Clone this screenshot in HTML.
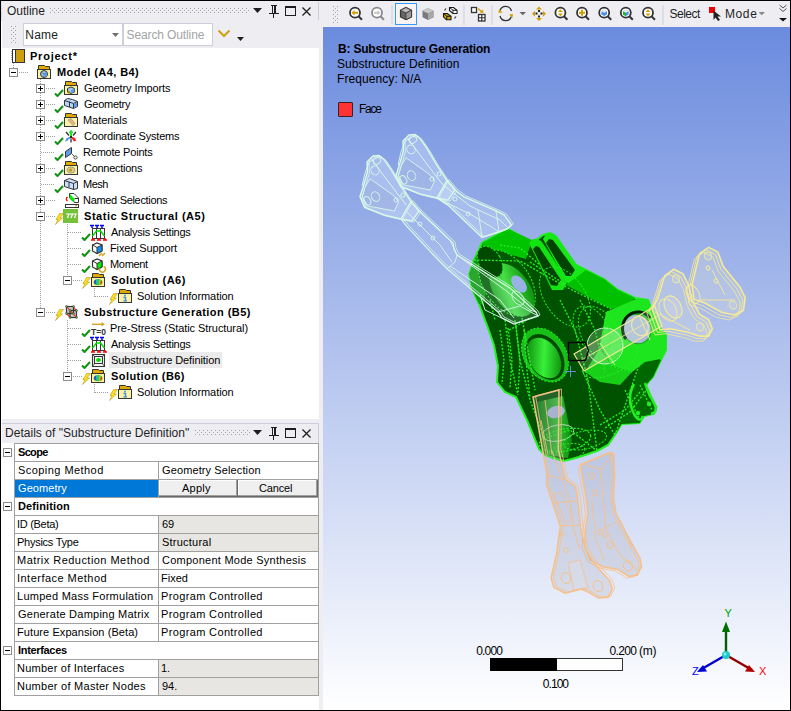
<!DOCTYPE html>
<html><head><meta charset="utf-8"><style>
html,body{margin:0;padding:0;width:791px;height:711px;overflow:hidden;background:#000}
body{font-family:"Liberation Sans", sans-serif;position:relative}
</style></head><body>
<div style="position:absolute;left:1px;top:1px;width:322px;height:709px;background:#eeeef2"></div><div style="position:absolute;left:1px;top:1px;width:1px;height:20px;background:#dcdfe8"></div><div style="position:absolute;left:7px;top:2.84px;height:16px;line-height:16px;font-size:12px;font-weight:normal;color:#1e1e1e;letter-spacing:-0.033px;white-space:nowrap;">Outline</div><svg style="position:absolute;left:50px;top:8px;" width="199" height="5" viewBox="0 0 199 5" shape-rendering="crispEdges"><defs><pattern id="p50_8" width="4" height="4" patternUnits="userSpaceOnUse"><rect x="0" y="0" width="1" height="1" fill="#a3a3a8"/><rect x="2" y="2" width="1" height="1" fill="#a3a3a8"/></pattern></defs><rect width="199" height="5" fill="url(#p50_8)"/></svg><svg style="position:absolute;left:253px;top:8px;shape-rendering:auto" width="10" height="6" viewBox="0 0 10 6" shape-rendering="crispEdges"><path d="M0 0H9L4.5 5Z" fill="#1e1e1e"/></svg><svg style="position:absolute;left:269px;top:5px;" width="10" height="13" viewBox="0 0 10 13" shape-rendering="crispEdges"><rect x="2" y="0" width="6" height="1" fill="#1e1e1e"/><rect x="3" y="1" width="1" height="7" fill="#1e1e1e"/><rect x="6" y="1" width="1" height="7" fill="#1e1e1e"/><rect x="5" y="1" width="1" height="7" fill="#1e1e1e"/><rect x="0" y="8" width="10" height="1" fill="#1e1e1e"/><rect x="4" y="9" width="1" height="4" fill="#1e1e1e"/></svg><svg style="position:absolute;left:285px;top:6px;" width="11" height="10" viewBox="0 0 11 10" shape-rendering="crispEdges"><rect x="0.5" y="1.5" width="10" height="8" fill="none" stroke="#1e1e1e"/><rect x="0" y="0" width="11" height="2" fill="#1e1e1e"/></svg><svg style="position:absolute;left:301px;top:6px;" width="11" height="11" viewBox="0 0 11 11"><path d="M1.5 1.5L9.5 9.5M9.5 1.5L1.5 9.5" stroke="#1e1e1e" stroke-width="1.25"/></svg><div style="position:absolute;left:318px;top:2px;width:1px;height:18px;background:#cccedb"></div><svg style="position:absolute;left:11px;top:26px;" width="6" height="18" viewBox="0 0 6 18" shape-rendering="crispEdges"><defs><pattern id="p11_26" width="4" height="4" patternUnits="userSpaceOnUse"><rect x="0" y="0" width="1" height="1" fill="#a3a3a8"/><rect x="2" y="2" width="1" height="1" fill="#a3a3a8"/></pattern></defs><rect width="6" height="18" fill="url(#p11_26)"/></svg><div style="position:absolute;left:23px;top:23px;width:100px;height:23px;background:#fff;border:1px solid #cccedb;box-sizing:border-box"></div><div style="position:absolute;left:25.3px;top:26.84px;height:16px;line-height:16px;font-size:12px;font-weight:normal;color:#1e1e1e;letter-spacing:0.200px;white-space:nowrap;">Name</div><svg style="position:absolute;left:112px;top:33px;shape-rendering:auto" width="8" height="5" viewBox="0 0 8 5" shape-rendering="crispEdges"><path d="M0 0H7L3.5 4Z" fill="#717171"/></svg><div style="position:absolute;left:123px;top:23px;width:90px;height:23px;background:#fff;border:1px solid #cccedb;box-sizing:border-box"></div><div style="position:absolute;left:126.5px;top:26.84px;height:16px;line-height:16px;font-size:12px;font-weight:normal;color:#a2a4a5;letter-spacing:-0.115px;white-space:nowrap;">Search Outline</div><svg style="position:absolute;left:217px;top:29px;" width="15" height="9" viewBox="0 0 15 9"><path d="M1.5 1.5L7 7L12.5 1.5" fill="none" stroke="#d0a010" stroke-width="2"/></svg><svg style="position:absolute;left:237px;top:37px;shape-rendering:auto" width="7" height="4" viewBox="0 0 7 4" shape-rendering="crispEdges"><path d="M0 0H7L3.5 4Z" fill="#1e1e1e"/></svg><div style="position:absolute;left:1px;top:48px;width:318px;height:371px;background:#fff"></div><div style="position:absolute;left:109px;top:352px;width:113px;height:16px;background:#ebebeb"></div><svg style="position:absolute;left:13px;top:63px;" width="1" height="5" viewBox="0 0 1 5" shape-rendering="crispEdges"><path d="M0.5 0V5" stroke="#a0a0a0" stroke-dasharray="1 1"/></svg><svg style="position:absolute;left:19px;top:72px;" width="10" height="1" viewBox="0 0 10 1" shape-rendering="crispEdges"><path d="M0 0.5H10" stroke="#a0a0a0" stroke-dasharray="1 1"/></svg><svg style="position:absolute;left:40px;top:79px;" width="1" height="234" viewBox="0 0 1 234" shape-rendering="crispEdges"><path d="M0.5 0V234" stroke="#a0a0a0" stroke-dasharray="1 1"/></svg><svg style="position:absolute;left:67px;top:224px;" width="1" height="57" viewBox="0 0 1 57" shape-rendering="crispEdges"><path d="M0.5 0V57" stroke="#a0a0a0" stroke-dasharray="1 1"/></svg><svg style="position:absolute;left:67px;top:320px;" width="1" height="57" viewBox="0 0 1 57" shape-rendering="crispEdges"><path d="M0.5 0V57" stroke="#a0a0a0" stroke-dasharray="1 1"/></svg><svg style="position:absolute;left:94px;top:288px;" width="1" height="9" viewBox="0 0 1 9" shape-rendering="crispEdges"><path d="M0.5 0V9" stroke="#a0a0a0" stroke-dasharray="1 1"/></svg><svg style="position:absolute;left:94px;top:384px;" width="1" height="9" viewBox="0 0 1 9" shape-rendering="crispEdges"><path d="M0.5 0V9" stroke="#a0a0a0" stroke-dasharray="1 1"/></svg><svg style="position:absolute;left:9px;top:48px;" width="17" height="17" viewBox="0 0 17 17"><rect x="3.5" y="1.5" width="12" height="13" fill="#cc9e10" stroke="#353535"/><rect x="4" y="2" width="2" height="12" fill="#fff"/><rect x="6" y="2" width="1" height="12" fill="#353535"/><path d="M2.5 3v10" stroke="#aaa" stroke-dasharray="1 1"/></svg><div style="position:absolute;left:30px;top:48.19px;height:16px;line-height:16px;font-size:11px;font-weight:bold;color:#000;letter-spacing:0.771px;white-space:nowrap;">Project*</div><svg style="position:absolute;left:9px;top:68px;" width="9" height="9" viewBox="0 0 9 9" shape-rendering="crispEdges"><rect x="0.5" y="0.5" width="8" height="8" fill="#fff" stroke="#8c8c8c"/><rect x="2" y="4" width="5" height="1" fill="#000"/></svg><svg style="position:absolute;left:19px;top:72px;" width="9" height="1" viewBox="0 0 9 1" shape-rendering="crispEdges"><path d="M0 0.5H9" stroke="#a0a0a0" stroke-dasharray="1 1"/></svg><svg style="position:absolute;left:36px;top:64px;" width="17" height="17" viewBox="0 0 17 17"><path d="M2.5 5.5V1.5H8.5L9.5 2.5H13.5V5.5Z" fill="#e1a900" stroke="#353535"/><rect x="1.5" y="5.5" width="13" height="9" fill="#fbf2a2" stroke="#353535"/><circle cx="8" cy="10" r="3.5" fill="#9cc4f4" stroke="#353535"/><path d="M8 10V13.5M8 10L5 8M8 10L11 8" stroke="#555" stroke-width="0.7"/><path d="M8 10L11 8V12L8 13.5Z" fill="#5a9cf0"/></svg><div style="position:absolute;left:57px;top:64.19px;height:16px;line-height:16px;font-size:11px;font-weight:bold;color:#000;letter-spacing:0.408px;white-space:nowrap;">Model (A4, B4)</div><svg style="position:absolute;left:36px;top:84px;" width="9" height="9" viewBox="0 0 9 9" shape-rendering="crispEdges"><rect x="0.5" y="0.5" width="8" height="8" fill="#fff" stroke="#8c8c8c"/><rect x="2" y="4" width="5" height="1" fill="#000"/><rect x="4" y="2" width="1" height="5" fill="#000"/></svg><svg style="position:absolute;left:46px;top:88px;" width="9" height="1" viewBox="0 0 9 1" shape-rendering="crispEdges"><path d="M0 0.5H9" stroke="#a0a0a0" stroke-dasharray="1 1"/></svg><svg style="position:absolute;left:54px;top:88px;" width="10" height="9" viewBox="0 0 10 9"><path d="M1 5.5L3.5 8L9 2" fill="none" stroke="#129612" stroke-width="2.1" stroke-linejoin="miter"/></svg><svg style="position:absolute;left:63px;top:80px;" width="17" height="17" viewBox="0 0 17 17"><path d="M2.5 5.5V1.5H8.5L9.5 2.5H13.5V5.5Z" fill="#e1a900" stroke="#353535"/><rect x="1.5" y="5.5" width="13" height="9" fill="#fbf2a2" stroke="#353535"/><path d="M4.5 8.5L8 7L11.5 8.5V12L8 13.5L4.5 12Z" fill="#a8cdf8" stroke="#353535"/><path d="M8 10V13.5L11.5 12V8.5Z" fill="#5a9cf0"/><path d="M4 12h3M5.5 10.5v3" stroke="#c08000" stroke-width="1"/></svg><div style="position:absolute;left:84px;top:80.19px;height:16px;line-height:16px;font-size:11px;font-weight:normal;color:#000;letter-spacing:-0.100px;white-space:nowrap;">Geometry Imports</div><svg style="position:absolute;left:36px;top:100px;" width="9" height="9" viewBox="0 0 9 9" shape-rendering="crispEdges"><rect x="0.5" y="0.5" width="8" height="8" fill="#fff" stroke="#8c8c8c"/><rect x="2" y="4" width="5" height="1" fill="#000"/><rect x="4" y="2" width="1" height="5" fill="#000"/></svg><svg style="position:absolute;left:46px;top:104px;" width="9" height="1" viewBox="0 0 9 1" shape-rendering="crispEdges"><path d="M0 0.5H9" stroke="#a0a0a0" stroke-dasharray="1 1"/></svg><svg style="position:absolute;left:54px;top:104px;" width="10" height="9" viewBox="0 0 10 9"><path d="M1 5.5L3.5 8L9 2" fill="none" stroke="#129612" stroke-width="2.1" stroke-linejoin="miter"/></svg><svg style="position:absolute;left:63px;top:96px;" width="17" height="17" viewBox="0 0 17 17"><path d="M1.5 4.5L4.5 2.5L9.5 3.5L14.5 5.5V10.5L10.5 12.5L1.5 9.5Z" fill="#b5d5fb" stroke="#353535"/><path d="M6.5 5.5V11M10.5 7.5V12.5M1.5 4.5L10.5 7.5L14.5 5.5" fill="none" stroke="#353535"/><path d="M11 8L14 6V10L11 12Z" fill="#5aa0f0"/></svg><div style="position:absolute;left:84px;top:96.19px;height:16px;line-height:16px;font-size:11px;font-weight:normal;color:#000;letter-spacing:-0.257px;white-space:nowrap;">Geometry</div><svg style="position:absolute;left:36px;top:116px;" width="9" height="9" viewBox="0 0 9 9" shape-rendering="crispEdges"><rect x="0.5" y="0.5" width="8" height="8" fill="#fff" stroke="#8c8c8c"/><rect x="2" y="4" width="5" height="1" fill="#000"/><rect x="4" y="2" width="1" height="5" fill="#000"/></svg><svg style="position:absolute;left:46px;top:120px;" width="9" height="1" viewBox="0 0 9 1" shape-rendering="crispEdges"><path d="M0 0.5H9" stroke="#a0a0a0" stroke-dasharray="1 1"/></svg><svg style="position:absolute;left:54px;top:120px;" width="10" height="9" viewBox="0 0 10 9"><path d="M1 5.5L3.5 8L9 2" fill="none" stroke="#129612" stroke-width="2.1" stroke-linejoin="miter"/></svg><svg style="position:absolute;left:63px;top:112px;" width="17" height="17" viewBox="0 0 17 17"><path d="M2.5 5.5V1.5H8.5L9.5 2.5H13.5V5.5Z" fill="#e1a900" stroke="#353535"/><rect x="1.5" y="5.5" width="13" height="9" fill="#fbf2a2" stroke="#353535"/><path d="M5 8L8 6.5L12 11.5L10 13.5Z" fill="#f0b080" stroke="#999" stroke-width="0.8"/></svg><div style="position:absolute;left:83px;top:112.19px;height:16px;line-height:16px;font-size:11px;font-weight:normal;color:#000;letter-spacing:-0.050px;white-space:nowrap;">Materials</div><svg style="position:absolute;left:36px;top:132px;" width="9" height="9" viewBox="0 0 9 9" shape-rendering="crispEdges"><rect x="0.5" y="0.5" width="8" height="8" fill="#fff" stroke="#8c8c8c"/><rect x="2" y="4" width="5" height="1" fill="#000"/><rect x="4" y="2" width="1" height="5" fill="#000"/></svg><svg style="position:absolute;left:46px;top:136px;" width="9" height="1" viewBox="0 0 9 1" shape-rendering="crispEdges"><path d="M0 0.5H9" stroke="#a0a0a0" stroke-dasharray="1 1"/></svg><svg style="position:absolute;left:54px;top:136px;" width="10" height="9" viewBox="0 0 10 9"><path d="M1 5.5L3.5 8L9 2" fill="none" stroke="#129612" stroke-width="2.1" stroke-linejoin="miter"/></svg><svg style="position:absolute;left:63px;top:128px;" width="17" height="17" viewBox="0 0 17 17"><path d="M8 1.5L10.5 5H9V9H7V5H5.5Z" fill="#1ee81e"/><path d="M8 9L13.5 12.5L11 13.5Z" fill="#f02020"/><path d="M9 9.5L12.5 11.5" stroke="#f02020" stroke-width="2"/><path d="M7 9.5L3.5 11.5" stroke="#4a90f0" stroke-width="2"/><path d="M2 13.5L3.5 10.5L5 12.5Z" fill="#4a90f0"/><rect x="7" y="8" width="2" height="2" fill="#222"/><rect x="7" y="10.5" width="2" height="4" fill="#777"/><path d="M3 4L6 7.5M13 4L10 7.5" stroke="#333" stroke-width="1.3"/></svg><div style="position:absolute;left:84px;top:128.19px;height:16px;line-height:16px;font-size:11px;font-weight:normal;color:#000;letter-spacing:-0.206px;white-space:nowrap;">Coordinate Systems</div><svg style="position:absolute;left:41px;top:152px;" width="14" height="1" viewBox="0 0 14 1" shape-rendering="crispEdges"><path d="M0 0.5H14" stroke="#a0a0a0" stroke-dasharray="1 1"/></svg><svg style="position:absolute;left:54px;top:152px;" width="10" height="9" viewBox="0 0 10 9"><path d="M1 5.5L3.5 8L9 2" fill="none" stroke="#129612" stroke-width="2.1" stroke-linejoin="miter"/></svg><svg style="position:absolute;left:63px;top:144px;" width="17" height="17" viewBox="0 0 17 17"><path d="M2.5 7.5L8.5 3.5V9.5L2.5 13.5Z" fill="#5a9cf0" stroke="#353535"/><path d="M9 10L12 13" stroke="#555"/><circle cx="12.5" cy="13.5" r="1.6" fill="#fff" stroke="#444"/></svg><div style="position:absolute;left:83px;top:144.19px;height:16px;line-height:16px;font-size:11px;font-weight:normal;color:#000;letter-spacing:-0.208px;white-space:nowrap;">Remote Points</div><svg style="position:absolute;left:36px;top:164px;" width="9" height="9" viewBox="0 0 9 9" shape-rendering="crispEdges"><rect x="0.5" y="0.5" width="8" height="8" fill="#fff" stroke="#8c8c8c"/><rect x="2" y="4" width="5" height="1" fill="#000"/><rect x="4" y="2" width="1" height="5" fill="#000"/></svg><svg style="position:absolute;left:46px;top:168px;" width="9" height="1" viewBox="0 0 9 1" shape-rendering="crispEdges"><path d="M0 0.5H9" stroke="#a0a0a0" stroke-dasharray="1 1"/></svg><svg style="position:absolute;left:54px;top:168px;" width="10" height="9" viewBox="0 0 10 9"><path d="M1 5.5L3.5 8L9 2" fill="none" stroke="#129612" stroke-width="2.1" stroke-linejoin="miter"/></svg><svg style="position:absolute;left:63px;top:160px;" width="17" height="17" viewBox="0 0 17 17"><path d="M2.5 5.5V1.5H8.5L9.5 2.5H13.5V5.5Z" fill="#e1a900" stroke="#353535"/><rect x="1.5" y="5.5" width="13" height="9" fill="#fbf2a2" stroke="#353535"/><ellipse cx="8" cy="10" rx="4" ry="3" fill="#d8d090" stroke="#777" stroke-width="0.6"/><circle cx="7.5" cy="10" r="1.5" fill="#d09000"/></svg><div style="position:absolute;left:84px;top:160.19px;height:16px;line-height:16px;font-size:11px;font-weight:normal;color:#000;letter-spacing:-0.270px;white-space:nowrap;">Connections</div><svg style="position:absolute;left:41px;top:184px;" width="14" height="1" viewBox="0 0 14 1" shape-rendering="crispEdges"><path d="M0 0.5H14" stroke="#a0a0a0" stroke-dasharray="1 1"/></svg><svg style="position:absolute;left:54px;top:184px;" width="10" height="9" viewBox="0 0 10 9"><path d="M1 5.5L3.5 8L9 2" fill="none" stroke="#129612" stroke-width="2.1" stroke-linejoin="miter"/></svg><svg style="position:absolute;left:63px;top:176px;" width="17" height="17" viewBox="0 0 17 17"><path d="M1.5 4.5L6.5 2.5L14.5 5.5V12.5L10.5 13.5L1.5 10.5Z" fill="#c8e0fb" stroke="#353535"/><path d="M1.5 4.5L10.5 7.5L14.5 5.5M10.5 7.5V13.5M6 6V11.5" fill="none" stroke="#353535"/></svg><div style="position:absolute;left:83px;top:176.19px;height:16px;line-height:16px;font-size:11px;font-weight:normal;color:#000;letter-spacing:-0.500px;white-space:nowrap;">Mesh</div><svg style="position:absolute;left:36px;top:196px;" width="9" height="9" viewBox="0 0 9 9" shape-rendering="crispEdges"><rect x="0.5" y="0.5" width="8" height="8" fill="#fff" stroke="#8c8c8c"/><rect x="2" y="4" width="5" height="1" fill="#000"/><rect x="4" y="2" width="1" height="5" fill="#000"/></svg><svg style="position:absolute;left:46px;top:200px;" width="9" height="1" viewBox="0 0 9 1" shape-rendering="crispEdges"><path d="M0 0.5H9" stroke="#a0a0a0" stroke-dasharray="1 1"/></svg><svg style="position:absolute;left:63px;top:192px;" width="17" height="17" viewBox="0 0 17 17"><path d="M6.5 1.5H11L15.5 6V10.5H11.5L6.5 6Z" fill="#fff" stroke="#353535"/><path d="M7 2L11.5 7V10H11L6.5 6Z" fill="#00ee00"/><path d="M11.5 6.5H15.5" stroke="#353535"/><path d="M4.5 5C3 6 3 8 4.5 9" fill="none" stroke="#f00" stroke-width="1.3"/><rect x="2.5" y="12.5" width="13" height="3" fill="#fff" stroke="#353535"/><rect x="12" y="13" width="2" height="1.5" fill="#e0b030"/></svg><div style="position:absolute;left:83px;top:192.19px;height:16px;line-height:16px;font-size:11px;font-weight:normal;color:#000;letter-spacing:-0.313px;white-space:nowrap;">Named Selections</div><svg style="position:absolute;left:36px;top:212px;" width="9" height="9" viewBox="0 0 9 9" shape-rendering="crispEdges"><rect x="0.5" y="0.5" width="8" height="8" fill="#fff" stroke="#8c8c8c"/><rect x="2" y="4" width="5" height="1" fill="#000"/></svg><svg style="position:absolute;left:46px;top:216px;" width="9" height="1" viewBox="0 0 9 1" shape-rendering="crispEdges"><path d="M0 0.5H9" stroke="#a0a0a0" stroke-dasharray="1 1"/></svg><svg style="position:absolute;left:54px;top:213px;" width="10" height="12" viewBox="0 0 10 12"><path d="M5.5 0.5L9.5 0.5L6 5H8.5L1.5 11.5L4 6.5H2Z" fill="#f8e020" stroke="#b89a20" stroke-width="0.6"/></svg><svg style="position:absolute;left:63px;top:208px;" width="17" height="17" viewBox="0 0 17 17"><rect x="0" y="1" width="15" height="14" fill="#76c13a"/><path d="M3 6H6L4.5 10M6.5 6H9.5L8 10M10 6H13L11.5 10" stroke="#fff" stroke-width="1.2" fill="none"/></svg><div style="position:absolute;left:84px;top:208.19px;height:16px;line-height:16px;font-size:11px;font-weight:bold;color:#000;letter-spacing:0.548px;white-space:nowrap;">Static Structural (A5)</div><svg style="position:absolute;left:68px;top:232px;" width="14" height="1" viewBox="0 0 14 1" shape-rendering="crispEdges"><path d="M0 0.5H14" stroke="#a0a0a0" stroke-dasharray="1 1"/></svg><svg style="position:absolute;left:81px;top:232px;" width="10" height="9" viewBox="0 0 10 9"><path d="M1 5.5L3.5 8L9 2" fill="none" stroke="#129612" stroke-width="2.1" stroke-linejoin="miter"/></svg><svg style="position:absolute;left:90px;top:224px;" width="17" height="17" viewBox="0 0 17 17"><path d="M0 1.5H4M5 1.5H9M10 1.5H14M2 1.5V4M7 1.5V4M12 1.5V4" stroke="#0000ff" stroke-width="1.5"/><rect x="2.5" y="4.5" width="12" height="10" fill="#fff" stroke="#353535"/><path d="M6.5 4.5V14.5M10.5 4.5V14.5" stroke="#353535"/><path d="M2.5 12L6.5 7H10.5L14.5 12" fill="none" stroke="#00e000" stroke-width="1.5"/><path d="M1 16H5M7 16H11M13 16H17M3 14V16M9 14V16M15 14V16" stroke="#ff0000" stroke-width="1.5"/></svg><div style="position:absolute;left:111px;top:224.19px;height:16px;line-height:16px;font-size:11px;font-weight:normal;color:#000;letter-spacing:-0.244px;white-space:nowrap;">Analysis Settings</div><svg style="position:absolute;left:68px;top:248px;" width="14" height="1" viewBox="0 0 14 1" shape-rendering="crispEdges"><path d="M0 0.5H14" stroke="#a0a0a0" stroke-dasharray="1 1"/></svg><svg style="position:absolute;left:81px;top:248px;" width="10" height="9" viewBox="0 0 10 9"><path d="M1 5.5L3.5 8L9 2" fill="none" stroke="#129612" stroke-width="2.1" stroke-linejoin="miter"/></svg><svg style="position:absolute;left:90px;top:240px;" width="17" height="17" viewBox="0 0 17 17"><path d="M2.5 5L7 3L12 5V11L7 13.5L2.5 11Z" fill="#fff" stroke="#353535" stroke-width="1.2"/><path d="M7 7.5L12 5V11L7 13.5Z" fill="#0a90ff" stroke="#353535" stroke-width="1"/><path d="M2.5 5L7 7.5" stroke="#353535"/><path d="M9 16L12 13M12 16L15 13" stroke="#d4a820" stroke-width="1.6"/></svg><div style="position:absolute;left:110px;top:240.19px;height:16px;line-height:16px;font-size:11px;font-weight:normal;color:#000;letter-spacing:-0.117px;white-space:nowrap;">Fixed Support</div><svg style="position:absolute;left:68px;top:264px;" width="14" height="1" viewBox="0 0 14 1" shape-rendering="crispEdges"><path d="M0 0.5H14" stroke="#a0a0a0" stroke-dasharray="1 1"/></svg><svg style="position:absolute;left:81px;top:264px;" width="10" height="9" viewBox="0 0 10 9"><path d="M1 5.5L3.5 8L9 2" fill="none" stroke="#129612" stroke-width="2.1" stroke-linejoin="miter"/></svg><svg style="position:absolute;left:90px;top:256px;" width="17" height="17" viewBox="0 0 17 17"><path d="M2.5 5L7 3L12 5V11L7 13.5L2.5 11Z" fill="#fff" stroke="#353535" stroke-width="1.2"/><path d="M7 7.5L12 5V11L7 13.5Z" fill="#00ee00" stroke="#353535" stroke-width="1"/><path d="M2.5 5L7 7.5" stroke="#353535"/><path d="M9.5 12.5A3 3 0 1 0 14.5 11" fill="none" stroke="#d4a820" stroke-width="1.6"/><path d="M13 10.5L15.5 10L15 12.5Z" fill="#d4a820"/></svg><div style="position:absolute;left:110px;top:256.19px;height:16px;line-height:16px;font-size:11px;font-weight:normal;color:#000;letter-spacing:-0.320px;white-space:nowrap;">Moment</div><svg style="position:absolute;left:63px;top:276px;" width="9" height="9" viewBox="0 0 9 9" shape-rendering="crispEdges"><rect x="0.5" y="0.5" width="8" height="8" fill="#fff" stroke="#8c8c8c"/><rect x="2" y="4" width="5" height="1" fill="#000"/></svg><svg style="position:absolute;left:73px;top:280px;" width="9" height="1" viewBox="0 0 9 1" shape-rendering="crispEdges"><path d="M0 0.5H9" stroke="#a0a0a0" stroke-dasharray="1 1"/></svg><svg style="position:absolute;left:81px;top:277px;" width="10" height="12" viewBox="0 0 10 12"><path d="M5.5 0.5L9.5 0.5L6 5H8.5L1.5 11.5L4 6.5H2Z" fill="#f8e020" stroke="#b89a20" stroke-width="0.6"/></svg><svg style="position:absolute;left:90px;top:272px;" width="17" height="17" viewBox="0 0 17 17"><path d="M2.5 5.5V1.5H8.5L9.5 2.5H13.5V5.5Z" fill="#e1a900" stroke="#353535"/><rect x="1.5" y="5.5" width="13" height="9" fill="#fbf2a2" stroke="#353535"/><ellipse cx="8" cy="10.3" rx="4.3" ry="3" fill="#3aa03a"/><path d="M4 10A4 3 0 0 1 6 7.5L6.5 12.5A4 3 0 0 1 4 10Z" fill="#2a50e0"/><path d="M6 7.5L9 7.3L8.5 13L6.5 12.8Z" fill="#20c8a0"/><path d="M9 7.5L11 8L10.5 12.8L8.5 13Z" fill="#80e000"/><path d="M11 8.2A4 3 0 0 1 12.2 11L10.5 12.8Z" fill="#f03010"/></svg><div style="position:absolute;left:111px;top:272.19px;height:16px;line-height:16px;font-size:11px;font-weight:bold;color:#000;letter-spacing:0.492px;white-space:nowrap;">Solution (A6)</div><svg style="position:absolute;left:95px;top:296px;" width="14" height="1" viewBox="0 0 14 1" shape-rendering="crispEdges"><path d="M0 0.5H14" stroke="#a0a0a0" stroke-dasharray="1 1"/></svg><svg style="position:absolute;left:108px;top:293px;" width="10" height="12" viewBox="0 0 10 12"><path d="M5.5 0.5L9.5 0.5L6 5H8.5L1.5 11.5L4 6.5H2Z" fill="#f8e020" stroke="#b89a20" stroke-width="0.6"/></svg><svg style="position:absolute;left:117px;top:288px;" width="17" height="17" viewBox="0 0 17 17"><path d="M2.5 5.5V1.5H8.5L9.5 2.5H13.5V5.5Z" fill="#e1a900" stroke="#353535"/><rect x="1.5" y="5.5" width="13" height="9" fill="#fbf2a2" stroke="#353535"/><circle cx="8" cy="7.5" r="0.9" fill="#3a8af0"/><path d="M6.5 9.5H8.5V12.5M6.5 12.8H10" stroke="#3a8af0" stroke-width="1.3" fill="none"/></svg><div style="position:absolute;left:137px;top:288.19px;height:16px;line-height:16px;font-size:11px;font-weight:normal;color:#000;letter-spacing:-0.058px;white-space:nowrap;">Solution Information</div><svg style="position:absolute;left:36px;top:308px;" width="9" height="9" viewBox="0 0 9 9" shape-rendering="crispEdges"><rect x="0.5" y="0.5" width="8" height="8" fill="#fff" stroke="#8c8c8c"/><rect x="2" y="4" width="5" height="1" fill="#000"/></svg><svg style="position:absolute;left:46px;top:312px;" width="9" height="1" viewBox="0 0 9 1" shape-rendering="crispEdges"><path d="M0 0.5H9" stroke="#a0a0a0" stroke-dasharray="1 1"/></svg><svg style="position:absolute;left:54px;top:309px;" width="10" height="12" viewBox="0 0 10 12"><path d="M5.5 0.5L9.5 0.5L6 5H8.5L1.5 11.5L4 6.5H2Z" fill="#f8e020" stroke="#b89a20" stroke-width="0.6"/></svg><svg style="position:absolute;left:63px;top:304px;" width="17" height="17" viewBox="0 0 17 17"><path d="M3 2.5H10L13.5 6V13.5H6.5L3 10Z" fill="#c8c8c8"/><rect x="3.5" y="2.5" width="7" height="7" fill="none" stroke="#353535" stroke-width="1.2"/><rect x="7" y="6.5" width="6.5" height="7" fill="none" stroke="#353535" stroke-width="1.2"/><path d="M4 3L13 13M10.5 3L13.5 6.5M3.5 9.5L7 13" stroke="#f02020" stroke-width="1.1"/><g fill="#60c030" stroke="#333" stroke-width="0.5"><circle cx="3.5" cy="2.5" r="1"/><circle cx="10.5" cy="2.5" r="1"/><circle cx="3.5" cy="9.5" r="1"/><circle cx="10.5" cy="9.5" r="1"/><circle cx="7" cy="6.5" r="1"/><circle cx="13.5" cy="6.5" r="1"/><circle cx="7" cy="13.5" r="1"/><circle cx="13.5" cy="13.5" r="1"/></g></svg><div style="position:absolute;left:84px;top:304.19px;height:16px;line-height:16px;font-size:11px;font-weight:bold;color:#000;letter-spacing:0.463px;white-space:nowrap;">Substructure Generation (B5)</div><svg style="position:absolute;left:68px;top:328px;" width="14" height="1" viewBox="0 0 14 1" shape-rendering="crispEdges"><path d="M0 0.5H14" stroke="#a0a0a0" stroke-dasharray="1 1"/></svg><svg style="position:absolute;left:81px;top:328px;" width="10" height="9" viewBox="0 0 10 9"><path d="M1 5.5L3.5 8L9 2" fill="none" stroke="#129612" stroke-width="2.1" stroke-linejoin="miter"/></svg><svg style="position:absolute;left:90px;top:320px;" width="17" height="17" viewBox="0 0 17 17"><path d="M2 4.3H13" stroke="#d4a820" stroke-width="1.4"/><path d="M11.5 2L15 4.3L11.5 6.5Z" fill="#d4a820"/><text x="1" y="14.5" font-family="Liberation Sans" font-size="8.5" font-weight="bold" fill="#333">T=0</text></svg><div style="position:absolute;left:110px;top:320.19px;height:16px;line-height:16px;font-size:11px;font-weight:normal;color:#000;letter-spacing:-0.066px;white-space:nowrap;">Pre-Stress (Static Structural)</div><svg style="position:absolute;left:68px;top:344px;" width="14" height="1" viewBox="0 0 14 1" shape-rendering="crispEdges"><path d="M0 0.5H14" stroke="#a0a0a0" stroke-dasharray="1 1"/></svg><svg style="position:absolute;left:81px;top:344px;" width="10" height="9" viewBox="0 0 10 9"><path d="M1 5.5L3.5 8L9 2" fill="none" stroke="#129612" stroke-width="2.1" stroke-linejoin="miter"/></svg><svg style="position:absolute;left:90px;top:336px;" width="17" height="17" viewBox="0 0 17 17"><path d="M0 1.5H4M5 1.5H9M10 1.5H14M2 1.5V4M7 1.5V4M12 1.5V4" stroke="#0000ff" stroke-width="1.5"/><rect x="2.5" y="4.5" width="12" height="10" fill="#fff" stroke="#353535"/><path d="M6.5 4.5V14.5M10.5 4.5V14.5" stroke="#353535"/><path d="M2.5 12L6.5 7H10.5L14.5 12" fill="none" stroke="#00e000" stroke-width="1.5"/><path d="M1 16H5M7 16H11M13 16H17M3 14V16M9 14V16M15 14V16" stroke="#ff0000" stroke-width="1.5"/></svg><div style="position:absolute;left:111px;top:336.19px;height:16px;line-height:16px;font-size:11px;font-weight:normal;color:#000;letter-spacing:-0.244px;white-space:nowrap;">Analysis Settings</div><svg style="position:absolute;left:68px;top:360px;" width="14" height="1" viewBox="0 0 14 1" shape-rendering="crispEdges"><path d="M0 0.5H14" stroke="#a0a0a0" stroke-dasharray="1 1"/></svg><svg style="position:absolute;left:81px;top:360px;" width="10" height="9" viewBox="0 0 10 9"><path d="M1 5.5L3.5 8L9 2" fill="none" stroke="#129612" stroke-width="2.1" stroke-linejoin="miter"/></svg><svg style="position:absolute;left:90px;top:352px;" width="17" height="17" viewBox="0 0 17 17"><rect x="2.5" y="2.5" width="12" height="12" fill="#fff" stroke="#353535" stroke-width="1.1"/><rect x="4.5" y="4.5" width="8" height="7" fill="#fff" stroke="#353535" stroke-width="1.1"/><path d="M2.5 2.5L4.5 4.5M14.5 2.5L12.5 4.5M2.5 14.5L4.5 11.5M14.5 14.5L12.5 11.5" stroke="#353535" stroke-width="0.8"/><ellipse cx="8.5" cy="8" rx="2.5" ry="2" fill="#00e000"/></svg><div style="position:absolute;left:111px;top:352.19px;height:16px;line-height:16px;font-size:11px;font-weight:normal;color:#000;letter-spacing:-0.091px;white-space:nowrap;">Substructure Definition</div><svg style="position:absolute;left:63px;top:372px;" width="9" height="9" viewBox="0 0 9 9" shape-rendering="crispEdges"><rect x="0.5" y="0.5" width="8" height="8" fill="#fff" stroke="#8c8c8c"/><rect x="2" y="4" width="5" height="1" fill="#000"/></svg><svg style="position:absolute;left:73px;top:376px;" width="9" height="1" viewBox="0 0 9 1" shape-rendering="crispEdges"><path d="M0 0.5H9" stroke="#a0a0a0" stroke-dasharray="1 1"/></svg><svg style="position:absolute;left:81px;top:373px;" width="10" height="12" viewBox="0 0 10 12"><path d="M5.5 0.5L9.5 0.5L6 5H8.5L1.5 11.5L4 6.5H2Z" fill="#f8e020" stroke="#b89a20" stroke-width="0.6"/></svg><svg style="position:absolute;left:90px;top:368px;" width="17" height="17" viewBox="0 0 17 17"><path d="M2.5 5.5V1.5H8.5L9.5 2.5H13.5V5.5Z" fill="#e1a900" stroke="#353535"/><rect x="1.5" y="5.5" width="13" height="9" fill="#fbf2a2" stroke="#353535"/><ellipse cx="8" cy="10.3" rx="4.3" ry="3" fill="#3aa03a"/><path d="M4 10A4 3 0 0 1 6 7.5L6.5 12.5A4 3 0 0 1 4 10Z" fill="#2a50e0"/><path d="M6 7.5L9 7.3L8.5 13L6.5 12.8Z" fill="#20c8a0"/><path d="M9 7.5L11 8L10.5 12.8L8.5 13Z" fill="#80e000"/><path d="M11 8.2A4 3 0 0 1 12.2 11L10.5 12.8Z" fill="#f03010"/></svg><div style="position:absolute;left:111px;top:368.19px;height:16px;line-height:16px;font-size:11px;font-weight:bold;color:#000;letter-spacing:0.425px;white-space:nowrap;">Solution (B6)</div><svg style="position:absolute;left:95px;top:392px;" width="14" height="1" viewBox="0 0 14 1" shape-rendering="crispEdges"><path d="M0 0.5H14" stroke="#a0a0a0" stroke-dasharray="1 1"/></svg><svg style="position:absolute;left:108px;top:389px;" width="10" height="12" viewBox="0 0 10 12"><path d="M5.5 0.5L9.5 0.5L6 5H8.5L1.5 11.5L4 6.5H2Z" fill="#f8e020" stroke="#b89a20" stroke-width="0.6"/></svg><svg style="position:absolute;left:117px;top:384px;" width="17" height="17" viewBox="0 0 17 17"><path d="M2.5 5.5V1.5H8.5L9.5 2.5H13.5V5.5Z" fill="#e1a900" stroke="#353535"/><rect x="1.5" y="5.5" width="13" height="9" fill="#fbf2a2" stroke="#353535"/><circle cx="8" cy="7.5" r="0.9" fill="#3a8af0"/><path d="M6.5 9.5H8.5V12.5M6.5 12.8H10" stroke="#3a8af0" stroke-width="1.3" fill="none"/></svg><div style="position:absolute;left:137px;top:384.19px;height:16px;line-height:16px;font-size:11px;font-weight:normal;color:#000;letter-spacing:-0.058px;white-space:nowrap;">Solution Information</div><div style="position:absolute;left:2px;top:423px;width:317px;height:1px;background:#cccedb"></div><div style="position:absolute;left:5px;top:424.84px;height:16px;line-height:16px;font-size:12px;font-weight:normal;color:#1e1e1e;letter-spacing:0.029px;white-space:nowrap;">Details of &quot;Substructure Definition&quot;</div><svg style="position:absolute;left:195px;top:430px;" width="56" height="5" viewBox="0 0 56 5" shape-rendering="crispEdges"><defs><pattern id="p195_430" width="4" height="4" patternUnits="userSpaceOnUse"><rect x="0" y="0" width="1" height="1" fill="#a3a3a8"/><rect x="2" y="2" width="1" height="1" fill="#a3a3a8"/></pattern></defs><rect width="56" height="5" fill="url(#p195_430)"/></svg><svg style="position:absolute;left:253px;top:430px;shape-rendering:auto" width="10" height="6" viewBox="0 0 10 6" shape-rendering="crispEdges"><path d="M0 0H9L4.5 5Z" fill="#1e1e1e"/></svg><svg style="position:absolute;left:269px;top:427px;" width="10" height="13" viewBox="0 0 10 13" shape-rendering="crispEdges"><rect x="2" y="0" width="6" height="1" fill="#1e1e1e"/><rect x="3" y="1" width="1" height="7" fill="#1e1e1e"/><rect x="6" y="1" width="1" height="7" fill="#1e1e1e"/><rect x="5" y="1" width="1" height="7" fill="#1e1e1e"/><rect x="0" y="8" width="10" height="1" fill="#1e1e1e"/><rect x="4" y="9" width="1" height="4" fill="#1e1e1e"/></svg><svg style="position:absolute;left:285px;top:428px;" width="11" height="10" viewBox="0 0 11 10" shape-rendering="crispEdges"><rect x="0.5" y="1.5" width="10" height="8" fill="none" stroke="#1e1e1e"/><rect x="0" y="0" width="11" height="2" fill="#1e1e1e"/></svg><svg style="position:absolute;left:301px;top:428px;" width="11" height="11" viewBox="0 0 11 11"><path d="M1.5 1.5L9.5 9.5M9.5 1.5L1.5 9.5" stroke="#1e1e1e" stroke-width="1.25"/></svg><div style="position:absolute;left:318px;top:423px;width:1px;height:20px;background:#cccedb"></div><div style="position:absolute;left:1px;top:443px;width:318px;height:267px;background:#fff"></div><div style="position:absolute;left:14px;top:443px;width:305px;height:1px;background:#a0a0a0"></div><svg style="position:absolute;left:3px;top:448px;" width="9" height="9" viewBox="0 0 9 9" shape-rendering="crispEdges"><rect x="0.5" y="0.5" width="8" height="8" fill="#fff" stroke="#8c8c8c"/><rect x="2" y="4" width="5" height="1" fill="#000"/></svg><div style="position:absolute;left:18px;top:444.19px;height:16px;line-height:16px;font-size:11px;font-weight:bold;color:#000;letter-spacing:-0.675px;white-space:nowrap;">Scope</div><div style="position:absolute;left:14px;top:443px;width:1px;height:18px;background:#a0a0a0"></div><div style="position:absolute;left:318px;top:443px;width:1px;height:18px;background:#a0a0a0"></div><div style="position:absolute;left:14px;top:461px;width:305px;height:1px;background:#a0a0a0"></div><div style="position:absolute;left:158px;top:462px;width:1px;height:17px;background:#a0a0a0"></div><div style="position:absolute;left:18px;top:462.19px;height:16px;line-height:16px;font-size:11px;font-weight:normal;color:#000;letter-spacing:0.446px;white-space:nowrap;">Scoping Method</div><div style="position:absolute;left:162px;top:462.19px;height:16px;line-height:16px;font-size:11px;font-weight:normal;color:#000;letter-spacing:0.112px;white-space:nowrap;">Geometry Selection</div><div style="position:absolute;left:14px;top:461px;width:1px;height:18px;background:#a0a0a0"></div><div style="position:absolute;left:318px;top:461px;width:1px;height:18px;background:#a0a0a0"></div><div style="position:absolute;left:14px;top:479px;width:305px;height:1px;background:#a0a0a0"></div><div style="position:absolute;left:15px;top:480px;width:143px;height:17px;background:#0078d7"></div><div style="position:absolute;left:158px;top:480px;width:1px;height:17px;background:#a0a0a0"></div><div style="position:absolute;left:18px;top:480.19px;height:16px;line-height:16px;font-size:11px;font-weight:normal;color:#fff;letter-spacing:0.071px;white-space:nowrap;">Geometry</div><div style="position:absolute;left:159px;top:480px;width:79px;height:16px;background:#efefef"></div><div style="position:absolute;left:159px;top:480px;width:79px;height:1px;background:#fff"></div><div style="position:absolute;left:159px;top:480px;width:1px;height:16px;background:#fff"></div><div style="position:absolute;left:159px;top:495px;width:79px;height:1px;background:#a0a0a0"></div><div style="position:absolute;left:159px;top:496px;width:79px;height:1px;background:#696969"></div><div style="position:absolute;left:236px;top:480px;width:1px;height:16px;background:#a0a0a0"></div><div style="position:absolute;left:237px;top:480px;width:1px;height:17px;background:#696969"></div><div style="position:absolute;left:182px;top:480.19px;height:16px;line-height:16px;font-size:11px;font-weight:normal;color:#000;letter-spacing:0.225px;white-space:nowrap;">Apply</div><div style="position:absolute;left:238px;top:480px;width:80px;height:16px;background:#efefef"></div><div style="position:absolute;left:238px;top:480px;width:80px;height:1px;background:#fff"></div><div style="position:absolute;left:238px;top:480px;width:1px;height:16px;background:#fff"></div><div style="position:absolute;left:238px;top:495px;width:80px;height:1px;background:#a0a0a0"></div><div style="position:absolute;left:238px;top:496px;width:80px;height:1px;background:#696969"></div><div style="position:absolute;left:316px;top:480px;width:1px;height:16px;background:#a0a0a0"></div><div style="position:absolute;left:317px;top:480px;width:1px;height:17px;background:#696969"></div><div style="position:absolute;left:259px;top:480.19px;height:16px;line-height:16px;font-size:11px;font-weight:normal;color:#000;letter-spacing:-0.180px;white-space:nowrap;">Cancel</div><div style="position:absolute;left:14px;top:479px;width:1px;height:18px;background:#a0a0a0"></div><div style="position:absolute;left:318px;top:479px;width:1px;height:18px;background:#a0a0a0"></div><div style="position:absolute;left:14px;top:497px;width:305px;height:1px;background:#a0a0a0"></div><svg style="position:absolute;left:3px;top:502px;" width="9" height="9" viewBox="0 0 9 9" shape-rendering="crispEdges"><rect x="0.5" y="0.5" width="8" height="8" fill="#fff" stroke="#8c8c8c"/><rect x="2" y="4" width="5" height="1" fill="#000"/></svg><div style="position:absolute;left:18px;top:498.19px;height:16px;line-height:16px;font-size:11px;font-weight:bold;color:#000;letter-spacing:0.122px;white-space:nowrap;">Definition</div><div style="position:absolute;left:14px;top:497px;width:1px;height:18px;background:#a0a0a0"></div><div style="position:absolute;left:318px;top:497px;width:1px;height:18px;background:#a0a0a0"></div><div style="position:absolute;left:14px;top:515px;width:305px;height:1px;background:#a0a0a0"></div><div style="position:absolute;left:159px;top:516px;width:159px;height:17px;background:#e7e6e2"></div><div style="position:absolute;left:158px;top:516px;width:1px;height:17px;background:#a0a0a0"></div><div style="position:absolute;left:17px;top:516.19px;height:16px;line-height:16px;font-size:11px;font-weight:normal;color:#000;letter-spacing:-0.287px;white-space:nowrap;">ID (Beta)</div><div style="position:absolute;left:162px;top:516.19px;height:16px;line-height:16px;font-size:11px;font-weight:normal;color:#000;letter-spacing:0.000px;white-space:nowrap;">69</div><div style="position:absolute;left:14px;top:515px;width:1px;height:18px;background:#a0a0a0"></div><div style="position:absolute;left:318px;top:515px;width:1px;height:18px;background:#a0a0a0"></div><div style="position:absolute;left:14px;top:533px;width:305px;height:1px;background:#a0a0a0"></div><div style="position:absolute;left:159px;top:534px;width:159px;height:17px;background:#e7e6e2"></div><div style="position:absolute;left:158px;top:534px;width:1px;height:17px;background:#a0a0a0"></div><div style="position:absolute;left:17px;top:534.19px;height:16px;line-height:16px;font-size:11px;font-weight:normal;color:#000;letter-spacing:-0.255px;white-space:nowrap;">Physics Type</div><div style="position:absolute;left:162px;top:534.19px;height:16px;line-height:16px;font-size:11px;font-weight:normal;color:#000;letter-spacing:0.222px;white-space:nowrap;">Structural</div><div style="position:absolute;left:14px;top:533px;width:1px;height:18px;background:#a0a0a0"></div><div style="position:absolute;left:318px;top:533px;width:1px;height:18px;background:#a0a0a0"></div><div style="position:absolute;left:14px;top:551px;width:305px;height:1px;background:#a0a0a0"></div><div style="position:absolute;left:158px;top:552px;width:1px;height:17px;background:#a0a0a0"></div><div style="position:absolute;left:17px;top:552.19px;height:16px;line-height:16px;font-size:11px;font-weight:normal;color:#000;letter-spacing:0.464px;white-space:nowrap;">Matrix Reduction Method</div><div style="position:absolute;left:162px;top:552.19px;height:16px;line-height:16px;font-size:11px;font-weight:normal;color:#000;letter-spacing:0.252px;white-space:nowrap;">Component Mode Synthesis</div><div style="position:absolute;left:14px;top:551px;width:1px;height:18px;background:#a0a0a0"></div><div style="position:absolute;left:318px;top:551px;width:1px;height:18px;background:#a0a0a0"></div><div style="position:absolute;left:14px;top:569px;width:305px;height:1px;background:#a0a0a0"></div><div style="position:absolute;left:158px;top:570px;width:1px;height:17px;background:#a0a0a0"></div><div style="position:absolute;left:17px;top:570.19px;height:16px;line-height:16px;font-size:11px;font-weight:normal;color:#000;letter-spacing:0.473px;white-space:nowrap;">Interface Method</div><div style="position:absolute;left:161px;top:570.19px;height:16px;line-height:16px;font-size:11px;font-weight:normal;color:#000;letter-spacing:0.000px;white-space:nowrap;">Fixed</div><div style="position:absolute;left:14px;top:569px;width:1px;height:18px;background:#a0a0a0"></div><div style="position:absolute;left:318px;top:569px;width:1px;height:18px;background:#a0a0a0"></div><div style="position:absolute;left:14px;top:587px;width:305px;height:1px;background:#a0a0a0"></div><div style="position:absolute;left:158px;top:588px;width:1px;height:17px;background:#a0a0a0"></div><div style="position:absolute;left:17px;top:588.19px;height:16px;line-height:16px;font-size:11px;font-weight:normal;color:#000;letter-spacing:0.264px;white-space:nowrap;">Lumped Mass Formulation</div><div style="position:absolute;left:161px;top:588.19px;height:16px;line-height:16px;font-size:11px;font-weight:normal;color:#000;letter-spacing:0.359px;white-space:nowrap;">Program Controlled</div><div style="position:absolute;left:14px;top:587px;width:1px;height:18px;background:#a0a0a0"></div><div style="position:absolute;left:318px;top:587px;width:1px;height:18px;background:#a0a0a0"></div><div style="position:absolute;left:14px;top:605px;width:305px;height:1px;background:#a0a0a0"></div><div style="position:absolute;left:158px;top:606px;width:1px;height:17px;background:#a0a0a0"></div><div style="position:absolute;left:18px;top:606.19px;height:16px;line-height:16px;font-size:11px;font-weight:normal;color:#000;letter-spacing:0.241px;white-space:nowrap;">Generate Damping Matrix</div><div style="position:absolute;left:161px;top:606.19px;height:16px;line-height:16px;font-size:11px;font-weight:normal;color:#000;letter-spacing:0.359px;white-space:nowrap;">Program Controlled</div><div style="position:absolute;left:14px;top:605px;width:1px;height:18px;background:#a0a0a0"></div><div style="position:absolute;left:318px;top:605px;width:1px;height:18px;background:#a0a0a0"></div><div style="position:absolute;left:14px;top:623px;width:305px;height:1px;background:#a0a0a0"></div><div style="position:absolute;left:158px;top:624px;width:1px;height:17px;background:#a0a0a0"></div><div style="position:absolute;left:17px;top:624.19px;height:16px;line-height:16px;font-size:11px;font-weight:normal;color:#000;letter-spacing:0.082px;white-space:nowrap;">Future Expansion (Beta)</div><div style="position:absolute;left:161px;top:624.19px;height:16px;line-height:16px;font-size:11px;font-weight:normal;color:#000;letter-spacing:0.359px;white-space:nowrap;">Program Controlled</div><div style="position:absolute;left:14px;top:623px;width:1px;height:18px;background:#a0a0a0"></div><div style="position:absolute;left:318px;top:623px;width:1px;height:18px;background:#a0a0a0"></div><div style="position:absolute;left:14px;top:641px;width:305px;height:1px;background:#a0a0a0"></div><svg style="position:absolute;left:3px;top:646px;" width="9" height="9" viewBox="0 0 9 9" shape-rendering="crispEdges"><rect x="0.5" y="0.5" width="8" height="8" fill="#fff" stroke="#8c8c8c"/><rect x="2" y="4" width="5" height="1" fill="#000"/></svg><div style="position:absolute;left:18px;top:642.19px;height:16px;line-height:16px;font-size:11px;font-weight:bold;color:#000;letter-spacing:-0.322px;white-space:nowrap;">Interfaces</div><div style="position:absolute;left:14px;top:641px;width:1px;height:18px;background:#a0a0a0"></div><div style="position:absolute;left:318px;top:641px;width:1px;height:18px;background:#a0a0a0"></div><div style="position:absolute;left:14px;top:659px;width:305px;height:1px;background:#a0a0a0"></div><div style="position:absolute;left:159px;top:660px;width:159px;height:17px;background:#e7e6e2"></div><div style="position:absolute;left:158px;top:660px;width:1px;height:17px;background:#a0a0a0"></div><div style="position:absolute;left:17px;top:660.19px;height:16px;line-height:16px;font-size:11px;font-weight:normal;color:#000;letter-spacing:0.237px;white-space:nowrap;">Number of Interfaces</div><div style="position:absolute;left:161px;top:660.19px;height:16px;line-height:16px;font-size:11px;font-weight:normal;color:#000;letter-spacing:0.000px;white-space:nowrap;">1.</div><div style="position:absolute;left:14px;top:659px;width:1px;height:18px;background:#a0a0a0"></div><div style="position:absolute;left:318px;top:659px;width:1px;height:18px;background:#a0a0a0"></div><div style="position:absolute;left:14px;top:677px;width:305px;height:1px;background:#a0a0a0"></div><div style="position:absolute;left:159px;top:678px;width:159px;height:17px;background:#e7e6e2"></div><div style="position:absolute;left:158px;top:678px;width:1px;height:17px;background:#a0a0a0"></div><div style="position:absolute;left:17px;top:678.19px;height:16px;line-height:16px;font-size:11px;font-weight:normal;color:#000;letter-spacing:0.267px;white-space:nowrap;">Number of Master Nodes</div><div style="position:absolute;left:162px;top:678.19px;height:16px;line-height:16px;font-size:11px;font-weight:normal;color:#000;letter-spacing:0.000px;white-space:nowrap;">94.</div><div style="position:absolute;left:14px;top:677px;width:1px;height:18px;background:#a0a0a0"></div><div style="position:absolute;left:318px;top:677px;width:1px;height:18px;background:#a0a0a0"></div><div style="position:absolute;left:14px;top:695px;width:305px;height:1px;background:#a0a0a0"></div><div style="position:absolute;left:1px;top:21px;width:1px;height:689px;background:#fff"></div><div style="position:absolute;left:323px;top:1px;width:467px;height:26px;background:#eeeef2"></div><div style="position:absolute;left:323px;top:27px;width:467px;height:683px;background:linear-gradient(#6b8bde,#ffffff)"></div><svg style="position:absolute;left:333px;top:6px;" width="6" height="18" viewBox="0 0 6 18" shape-rendering="crispEdges"><defs><pattern id="p333_6" width="4" height="4" patternUnits="userSpaceOnUse"><rect x="0" y="0" width="1" height="1" fill="#a3a3a8"/><rect x="2" y="2" width="1" height="1" fill="#a3a3a8"/></pattern></defs><rect width="6" height="18" fill="url(#p333_6)"/></svg><svg style="position:absolute;left:0px;top:0px;" width="791" height="27" viewBox="0 0 791 27"><circle cx="355" cy="12.7" r="5" fill="#fff" stroke="#333" stroke-width="1.8"/><path d="M358.5 16.2L362 19.7" stroke="#333" stroke-width="2"/><path d="M351.5 12.7L354.5 10V11.7H358V13.7H354.5V15.4Z" fill="#d4a000"/><circle cx="377" cy="12.7" r="5" fill="#fff" stroke="#888" stroke-width="1.8"/><path d="M380.5 16.2L384 19.7" stroke="#888" stroke-width="2"/><path d="M380.5 12.7L377.5 10V11.7H374V13.7H377.5V15.4Z" fill="#c8c8c8"/><rect x="391.5" y="5" width="1" height="19" fill="#cccedb"/><rect x="395.5" y="3.5" width="21" height="21" fill="#f8f4f4" stroke="#3399ff"/><path d="M406 7.5L411.5 10.3V17L406 19.7L400.5 17V10.3Z" fill="#666" stroke="#333" stroke-width="1.2"/><path d="M406 7.5L411.5 10.3L406 13L400.5 10.3Z" fill="#bbb" stroke="#333" stroke-width="0.8"/><path d="M406 13L411.5 10.3V17L406 19.7Z" fill="#999" stroke="#333" stroke-width="0.8"/><path d="M428 8L433.5 10.8V17.2L428 20L422.5 17.2V10.8Z" fill="#7a7a7a"/><path d="M428 8L433.5 10.8L428 13.6L422.5 10.8Z" fill="#c8c8c8"/><path d="M428 13.6L433.5 10.8V17.2L428 20Z" fill="#a8a8a8"/><path d="M449.5 7.5H453.5L457 10.3V13.5H453L449.5 10.5Z" fill="#fff" stroke="#1a1a1a" stroke-width="1.1"/><path d="M449.5 7.5L453 10.3H457M453 10.3V13.5" fill="none" stroke="#1a1a1a" stroke-width="1"/><rect x="453.8" y="11" width="2.4" height="2" fill="#fff"/><path d="M443.5 13.5H447.3L451 16.3V19.8H446.3L443.5 16.8Z" fill="#d4a000" stroke="#1a1a1a" stroke-width="1.1"/><path d="M443.5 13.5L446.8 16.3H451M446.8 16.3V19.8" fill="none" stroke="#1a1a1a" stroke-width="1"/><path d="M444.5 10.5L446 8.5M454.5 18.5L456 16.5" stroke="#333" stroke-width="1.2"/><rect x="463.5" y="5" width="1" height="20" fill="#cccedb"/><rect x="471.5" y="7.5" width="5" height="5" fill="#fff" stroke="#333" stroke-width="1.3"/><path d="M478 8.5L482 12" stroke="#d4a000" stroke-width="1.4"/><path d="M483.5 13L479.5 12.5L483 9.5Z" fill="#d4a000"/><rect x="478.5" y="14.5" width="6.5" height="6.5" fill="#fff" stroke="#333" stroke-width="1.3"/><path d="M481.75 14.5V21M478.5 17.75H485" stroke="#333" stroke-width="1.2"/><rect x="491.5" y="5" width="1" height="20" fill="#cccedb"/><path d="M500 10.5A6 6 0 0 1 511.5 11M511.5 16.5A6 6 0 0 1 500 16" fill="none" stroke="#333" stroke-width="1.3"/><path d="M499 9L502.5 12.5L498.5 13Z" fill="#d4a000"/><path d="M512.5 18L509 14.5L513 14Z" fill="#d4a000"/><path d="M519.5 12H526L522.75 15.3Z" fill="#666"/><path d="M539 6.5L542 9.5H536ZM539 21L542 18H536ZM532 13.7L535 10.7V16.7ZM546 13.7L543 10.7V16.7Z" fill="#d4a000"/><rect x="535.5" y="12.5" width="2" height="2" fill="#222"/><rect x="540.5" y="12.5" width="2" height="2" fill="#222"/><rect x="538" y="10" width="2" height="2" fill="#222"/><rect x="538" y="15.5" width="2" height="2" fill="#222"/><circle cx="560.4" cy="12.7" r="5" fill="#fff" stroke="#333" stroke-width="1.8"/><path d="M563.9 16.2L567.4 19.7" stroke="#333" stroke-width="2"/><path d="M557.9 12.0L560.4 9.2L562.9 12.0ZM557.9 13.399999999999999L560.4 16.2L562.9 13.399999999999999Z" fill="#d4a000"/><circle cx="582" cy="12.7" r="5" fill="#fff" stroke="#333" stroke-width="1.8"/><path d="M585.5 16.2L589 19.7" stroke="#333" stroke-width="2"/><path d="M579 12.7H585M582 9.7V15.7" stroke="#d4a000" stroke-width="2"/><circle cx="604.2" cy="12.7" r="5" fill="#fff" stroke="#333" stroke-width="1.8"/><path d="M607.7 16.2L611.2 19.7" stroke="#333" stroke-width="2"/><path d="M604.2 9.7L607.0 11.2V14.5L604.2 15.899999999999999L601.4000000000001 14.5V11.2Z" fill="#4a90e8"/><path d="M604.2 9.7L607.0 11.2L604.2 12.7L601.4000000000001 11.2Z" fill="#eee"/><circle cx="625.8" cy="12.7" r="5" fill="#fff" stroke="#333" stroke-width="1.8"/><path d="M629.3 16.2L632.8 19.7" stroke="#333" stroke-width="2"/><path d="M625.8 9.7L628.5999999999999 11.2V14.5L625.8 15.899999999999999L623.0 14.5V11.2Z" fill="#4a90e8"/><path d="M623.0 11.2L625.8 12.7V15.899999999999999L623.0 14.5Z" fill="#10c010"/><path d="M625.8 9.7L628.5999999999999 11.2L625.8 12.7L623.0 11.2Z" fill="#eee"/><circle cx="648" cy="12.7" r="5" fill="#fff" stroke="#333" stroke-width="1.8"/><path d="M651.5 16.2L655 19.7" stroke="#333" stroke-width="2"/><path d="M645.5 12.0L648 9.2L650.5 12.0ZM645.5 13.399999999999999L648 16.2L650.5 13.399999999999999Z" fill="#d4a000"/><rect x="662.5" y="5" width="1" height="20" fill="#cccedb"/><rect x="709" y="7" width="6" height="6" fill="#f00000"/><path d="M713.5 10.5V20L715.5 17.5L718 21L720 20L717.5 16.5H721Z" fill="#222"/><path d="M758.5 12H765L761.75 15.3Z" fill="#888"/><path d="M779.5 5L783 8L786.5 5M779.5 8.5L783 11.5L786.5 8.5" fill="none" stroke="#555" stroke-width="1"/><path d="M779 18H787L783 21.5Z" fill="#111"/></svg><div style="position:absolute;left:669.5px;top:5.84px;height:16px;line-height:16px;font-size:12px;font-weight:normal;color:#1e1e1e;letter-spacing:-0.500px;white-space:nowrap;">Select</div><div style="position:absolute;left:725px;top:5.84px;height:16px;line-height:16px;font-size:12px;font-weight:normal;color:#1e1e1e;letter-spacing:0.600px;white-space:nowrap;">Mode</div><div style="position:absolute;left:338px;top:40.84px;height:16px;line-height:16px;font-size:12px;font-weight:bold;color:#000;letter-spacing:-0.200px;white-space:nowrap;">B: Substructure Generation</div><div style="position:absolute;left:337px;top:55.84px;height:16px;line-height:16px;font-size:12px;font-weight:normal;color:#000;letter-spacing:0.045px;white-space:nowrap;">Substructure Definition</div><div style="position:absolute;left:337px;top:70.84px;height:16px;line-height:16px;font-size:12px;font-weight:normal;color:#000;letter-spacing:0.077px;white-space:nowrap;">Frequency: N/A</div><div style="position:absolute;left:338px;top:102px;width:15px;height:15px;background:#ff3333;border:1px solid #3a2020;box-sizing:border-box;border-radius:1px"></div><div style="position:absolute;left:359px;top:100.84px;height:16px;line-height:16px;font-size:12px;font-weight:normal;color:#000;letter-spacing:-1.233px;white-space:nowrap;">Face</div><svg style="position:absolute;left:0px;top:0px;pointer-events:none" width="791" height="711" viewBox="0 0 791 711"><path d="M482 243 L502 232 L508 229 L519 235 L530 242 L535 241 L543 235 L549.5 233 L556 237 L576 265 L586 270 L604 279 L618 290 L635 298 L648 300 L652 312 L660 329 L666 335 L666 350 L661 360 L653 377 L645 386 L648.5 396 L656.4 407 L654 414 L644 416 L639.5 423 L621.5 424 L615 435 L608 445 L597 451 L579 457 L564 461 L545 455 L539 449 L527 420 L516 397 L505 392 L497 382 L498 366 L494 345 L488 328 L479 304 L472 289 L469 274 L474 260 Z" fill="#005200" stroke="#20f020" stroke-width="2" /><path d="M640 362 L661 360 L653 377 L645 386 L648.5 396 L656.4 407 L654 414 L644 416 L639.5 423 L621.5 424 L615 435 L630 400 Z" fill="#006800" stroke="none" stroke-width="1" /><path d="M482 243 L508 229 L532 240 L526 259 L504 253 L499 252 L484 250 Z" fill="#00c400" stroke="none" stroke-width="1" /><path d="M529 243 L533 239 L538 239 L542 242 L568 281 L563 290 L552 290 Z" fill="#12e412" stroke="none" stroke-width="1" /><path d="M533 249 L536 246 L539 247 L561 280 L557 286 L551 285 Z" fill="#004400" stroke="none" stroke-width="1" /><path d="M543 239 L546 234 L551 232.5 L556 235 L576 264 L586 270 L578 282 L568 284 Z" fill="#16ea16" stroke="none" stroke-width="1" /><path d="M546 243 L549 239 L553 240 L575 270 L571 276 L566 276 Z" fill="#004400" stroke="none" stroke-width="1" /><path d="M566 285 L586 270 L604 279 L618 290 L635 298 L627 306 L611 309 Z" fill="#00c000" stroke="none" stroke-width="1" /><path d="M606 312 L636 299 L648 299 L656 314 L662 329 L667 334 L666 350 L661 359 L645 362 L632 372 L612 366 L600 345 Z" fill="#1ee61e" stroke="none" stroke-width="1" /><path d="M474 260 L482 246 L490 262 L486 290 L484 305 L479 304 L472 289 L469 274 Z" fill="#0a9a0a" stroke="none" stroke-width="1" /><ellipse cx="507" cy="283" rx="23" ry="37" transform="rotate(-35 507 283)" fill="#005a00" stroke="#20f020" stroke-width="1.1" stroke-dasharray="2 1.6"/><defs><linearGradient id="bore1" x1="0" y1="0" x2="1" y2="0.5"><stop offset="0" stop-color="#0c8c0c"/><stop offset="0.5" stop-color="#48e048"/><stop offset="1" stop-color="#129a12"/></linearGradient></defs><ellipse cx="512" cy="290" rx="18" ry="30" transform="rotate(-35 512 290)" fill="url(#bore1)" stroke="none" stroke-width="1" /><ellipse cx="519" cy="284" rx="6" ry="10" transform="rotate(-40 519 284)" fill="#98b2e6" stroke="none" stroke-width="1" /><ellipse cx="490" cy="262" rx="11" ry="17" transform="rotate(-30 490 262)" fill="#004a00" stroke="#20f020" stroke-width="1" stroke-dasharray="2 1.6"/><defs><linearGradient id="bore" x1="0" y1="0" x2="1" y2="1"><stop offset="0" stop-color="#006a00"/><stop offset="0.5" stop-color="#38f038"/><stop offset="1" stop-color="#007000"/></linearGradient></defs><ellipse cx="545" cy="355" rx="21" ry="29" transform="rotate(-32 545 355)" fill="#16c016" stroke="#20f020" stroke-width="1" stroke-dasharray="2 1.6"/><ellipse cx="545" cy="357" rx="17" ry="25" transform="rotate(-32 545 357)" fill="#004a00" stroke="none" stroke-width="1" /><ellipse cx="544" cy="358" rx="15" ry="22" transform="rotate(-32 544 358)" fill="url(#bore)" stroke="none" stroke-width="1" /><defs><linearGradient id="bore2" x1="0" y1="0" x2="1" y2="0"><stop offset="0" stop-color="#0a7a0a"/><stop offset="0.6" stop-color="#38c038"/><stop offset="1" stop-color="#0a8a0a"/></linearGradient></defs><path d="M537 402 L563 396 L572 440 L568 458 L545 455 L540 440 Z" fill="url(#bore2)" stroke="none" stroke-width="1" /><ellipse cx="556" cy="412" rx="9" ry="6" transform="rotate(-15 556 412)" fill="#a8b8d8" stroke="none" stroke-width="1" /><ellipse cx="565" cy="440" rx="26" ry="11" transform="rotate(-10 565 440)" fill="none" stroke="#20f020" stroke-width="1.3" stroke-dasharray="2 1.6"/><ellipse cx="558" cy="433" rx="16" ry="8" transform="rotate(-10 558 433)" fill="none" stroke="#c8e8c8" stroke-width="0.8" /><ellipse cx="637" cy="329" rx="14" ry="15" transform="rotate(-25 637 329)" fill="#a8bcd8" stroke="#10a010" stroke-width="1" /><path d="M626 339A14 15 0 0 1 650 318" fill="none" stroke="#001a00" stroke-width="3"/><ellipse cx="640" cy="326" rx="8" ry="10" transform="rotate(-25 640 326)" fill="none" stroke="#f6ea96" stroke-width="1" /><path d="M585 372 L600 348 L612 366 L632 372 L620 385 L600 382 Z" fill="#18d018" stroke="none" stroke-width="1" /><circle cx="605" cy="346" r="18" fill="rgba(200,240,200,0.25)" stroke="#d8f0d8" stroke-width="1"/><path d="M474 260 L520 261 L566 287 L611 309" fill="none" stroke="#20f020" stroke-width="1.4" stroke-dasharray="2 1.6"/><path d="M530 262 L566 285" fill="none" stroke="#20f020" stroke-width="1.4" stroke-dasharray="2 1.6"/><path d="M608 311 L600 345 L612 366 L632 372" fill="none" stroke="#20f020" stroke-width="1.4" stroke-dasharray="2 1.6"/><path d="M640 362 L615 435" fill="none" stroke="#20f020" stroke-width="1.4" stroke-dasharray="2 1.6"/><path d="M583 372 L600 410 L615 435" fill="none" stroke="#20f020" stroke-width="1.4" stroke-dasharray="2 1.6"/><path d="M540 440 L570 430 L597 451" fill="none" stroke="#20f020" stroke-width="1.4" stroke-dasharray="2 1.6"/><path d="M588 380 L597 451" fill="none" stroke="#20f020" stroke-width="1.4" stroke-dasharray="2 1.6"/><path d="M515 320 L520 360 L530 400 L545 440" fill="none" stroke="#20f020" stroke-width="1.4" stroke-dasharray="2 1.6"/><path d="M505 320 L510 360 L518 395" fill="none" stroke="#20f020" stroke-width="1.4" stroke-dasharray="2 1.6"/><path d="M522 318 L528 350 L535 390" fill="none" stroke="#20f020" stroke-width="1.4" stroke-dasharray="2 1.6"/><path d="M560 300 L575 330 L588 380" fill="none" stroke="#20f020" stroke-width="1.4" stroke-dasharray="2 1.6"/><path d="M580 300 L595 330 L605 372" fill="none" stroke="#20f020" stroke-width="1.4" stroke-dasharray="2 1.6"/><path d="M625 390 L640 420" fill="none" stroke="#20f020" stroke-width="1.4" stroke-dasharray="2 1.6"/><path d="M640 385 L652 410" fill="none" stroke="#20f020" stroke-width="1.4" stroke-dasharray="2 1.6"/><path d="M500 245 L520 248 L540 265" fill="none" stroke="#20f020" stroke-width="1.4" stroke-dasharray="2 1.6"/><path d="M490 300 L495 320" fill="none" stroke="#20f020" stroke-width="1.4" stroke-dasharray="2 1.6"/><ellipse cx="565" cy="297" rx="20" ry="34" transform="rotate(-35 565 297)" fill="none" stroke="#20f020" stroke-width="1" stroke-dasharray="2 1.6"/><ellipse cx="592" cy="330" rx="16" ry="26" transform="rotate(-30 592 330)" fill="none" stroke="#20f020" stroke-width="1" stroke-dasharray="2 1.6"/><ellipse cx="600" cy="334" rx="18" ry="30" transform="rotate(-30 600 334)" fill="none" stroke="#20f020" stroke-width="1" stroke-dasharray="2 1.6"/><ellipse cx="585" cy="440" rx="22" ry="9" transform="rotate(-12 585 440)" fill="none" stroke="#20f020" stroke-width="1" stroke-dasharray="2 1.6"/><ellipse cx="567" cy="452" rx="18" ry="8" transform="rotate(-10 567 452)" fill="none" stroke="#20f020" stroke-width="1" stroke-dasharray="2 1.6"/><ellipse cx="610" cy="360" rx="30" ry="14" transform="rotate(-25 610 360)" fill="none" stroke="#20f020" stroke-width="1" stroke-dasharray="2 1.6"/><path d="M500 330 L504 360 L502 384" fill="none" stroke="#20f020" stroke-width="1.4" stroke-dasharray="2 1.6"/><path d="M508 328 L512 360 L510 388" fill="none" stroke="#20f020" stroke-width="1.4" stroke-dasharray="2 1.6"/><path d="M516 326 L520 362 L518 392" fill="none" stroke="#20f020" stroke-width="1.4" stroke-dasharray="2 1.6"/><path d="M524 330 L527 370 L530 398" fill="none" stroke="#20f020" stroke-width="1.4" stroke-dasharray="2 1.6"/><path d="M506 332 L530 318" fill="none" stroke="#20f020" stroke-width="1.4" stroke-dasharray="2 1.6"/><path d="M640 392 L625 410 L600 425" fill="none" stroke="#20f020" stroke-width="1.4" stroke-dasharray="2 1.6"/><path d="M648 388 L630 412 L605 428" fill="none" stroke="#20f020" stroke-width="1.4" stroke-dasharray="2 1.6"/><path d="M634 384Q626 398 634 414Q640 424 643 416M645 383Q650 396 655 405Q658 412 651 414" fill="none" stroke="#22ee22" stroke-width="2.6"/><circle cx="638" cy="413" r="2.2" fill="#22ee22"/><circle cx="649" cy="404" r="2.2" fill="#22ee22"/><path d="M403 141 L409 135 L415 134.6 L420 138.4 L427 148.6 L437 165.4 L447 180.6 L455 190 L448 200 L437 198 L420 194 L400.6 186.3 L396 175.6 L399.2 165.4 L403.4 151 Z" fill="rgba(220,235,255,0.38)" stroke="#d8f8e6" stroke-width="1.5" /><path d="M405 142 L411 136 L417 135.6 L422 139.4 L429 149.6 L439 166.4 L449 181.6 L457 191 L450 201 L439 199 L422 195 L402.6 187.3 L398 176.6 L401.2 166.4 L405.4 152 Z" fill="none" stroke="#d8f8e6" stroke-width="0.8" /><path d="M406 157.8 L428.8 173.9 L434.7 180.6 L430.4 190 L403.4 184.9 L398.4 175.6 L400.9 166.3 Z" fill="rgba(70,90,160,0.10)" stroke="#d8f8e6" stroke-width="0.9" /><path d="M407.7 138.4 L420.3 155.3 L433 172.2 L442.3 184" fill="none" stroke="#d8f8e6" stroke-width="1" stroke-opacity="1"/><path d="M406 139 L401 152 L398 165" fill="none" stroke="#d8f8e6" stroke-width="0.9" stroke-opacity="1"/><ellipse cx="411" cy="149.4" rx="4" ry="4.5" transform="rotate(-30 411 149.4)" fill="none" stroke="#d8f8e6" stroke-width="0.9" /><ellipse cx="411.5" cy="175.6" rx="4" ry="5" transform="rotate(-30 411.5 175.6)" fill="none" stroke="#d8f8e6" stroke-width="0.9" /><ellipse cx="403.4" cy="179.8" rx="3" ry="4.5" transform="rotate(-30 403.4 179.8)" fill="none" stroke="#d8f8e6" stroke-width="0.9" /><ellipse cx="432" cy="179" rx="2" ry="2" transform="rotate(-30 432 179)" fill="none" stroke="#d8f8e6" stroke-width="0.9" /><ellipse cx="439" cy="174" rx="2" ry="2" transform="rotate(-30 439 174)" fill="none" stroke="#d8f8e6" stroke-width="0.9" /><ellipse cx="413" cy="140" rx="4" ry="3" transform="rotate(-30 413 140)" fill="none" stroke="#d8f8e6" stroke-width="0.9" /><path d="M447 180.6 L455 190 L463.6 196.7 L496 210.8 L504.4 215 L511.4 225 L507 229 L499 232 L482 237.5 L448 205 L437 198 Z" fill="rgba(220,235,255,0.30)" stroke="#d8f8e6" stroke-width="1.5" /><path d="M449 179.6 L457 189 L465.6 195.7 L498 209.8 L506.4 214 L513.4 224 L509 228 L501 231 L484 236.5 L450 204 L439 197 Z" fill="none" stroke="#d8f8e6" stroke-width="0.8" /><path d="M442 184 L470 206 L500 220 L507 227" fill="none" stroke="#d8f8e6" stroke-width="0.9" stroke-opacity="1"/><path d="M437 198 L470 214 L490 226 L499 232" fill="none" stroke="#d8f8e6" stroke-width="0.9" stroke-opacity="1"/><path d="M478 210 L482 237.5" fill="none" stroke="#d8f8e6" stroke-width="0.9" stroke-opacity="1"/><path d="M496 211 L499 232" fill="none" stroke="#d8f8e6" stroke-width="0.9" stroke-opacity="1"/><ellipse cx="455" cy="199" rx="2" ry="2" transform="rotate(0 455 199)" fill="none" stroke="#d8f8e6" stroke-width="0.9" /><ellipse cx="468" cy="214" rx="2" ry="2" transform="rotate(0 468 214)" fill="none" stroke="#d8f8e6" stroke-width="0.9" /><path d="M367 162 L373 156 L379 155.6 L384 159.4 L391 169.6 L401 186.4 L411 201.6 L419 211 L412 221 L401 219 L384 215 L364.6 207.3 L360 196.6 L363.2 186.4 L367.4 172 Z" fill="rgba(220,235,255,0.38)" stroke="#d8f8e6" stroke-width="1.5" /><path d="M369 163 L375 157 L381 156.6 L386 160.4 L393 170.6 L403 187.4 L413 202.6 L421 212 L414 222 L403 220 L386 216 L366.6 208.3 L362 197.6 L365.2 187.4 L369.4 173 Z" fill="none" stroke="#d8f8e6" stroke-width="0.8" /><path d="M370 178.8 L392.8 194.9 L398.7 201.6 L394.4 211 L367.4 205.9 L362.4 196.6 L364.9 187.3 Z" fill="rgba(70,90,160,0.10)" stroke="#d8f8e6" stroke-width="0.9" /><path d="M371.7 159.4 L384.3 176.3 L397 193.2 L406.3 205" fill="none" stroke="#d8f8e6" stroke-width="1" stroke-opacity="1"/><path d="M370 160 L365 173 L362 186" fill="none" stroke="#d8f8e6" stroke-width="0.9" stroke-opacity="1"/><ellipse cx="375" cy="170.4" rx="4" ry="4.5" transform="rotate(-30 375 170.4)" fill="none" stroke="#d8f8e6" stroke-width="0.9" /><ellipse cx="375.5" cy="196.6" rx="4" ry="5" transform="rotate(-30 375.5 196.6)" fill="none" stroke="#d8f8e6" stroke-width="0.9" /><ellipse cx="367.4" cy="200.8" rx="3" ry="4.5" transform="rotate(-30 367.4 200.8)" fill="none" stroke="#d8f8e6" stroke-width="0.9" /><ellipse cx="396" cy="200" rx="2" ry="2" transform="rotate(-30 396 200)" fill="none" stroke="#d8f8e6" stroke-width="0.9" /><ellipse cx="403" cy="195" rx="2" ry="2" transform="rotate(-30 403 195)" fill="none" stroke="#d8f8e6" stroke-width="0.9" /><ellipse cx="377" cy="161" rx="4" ry="3" transform="rotate(-30 377 161)" fill="none" stroke="#d8f8e6" stroke-width="0.9" /><path d="M411 201.6 L419 211 L453 243 L454 249 L457 255 L510 288 L536 312 L538 316 L514 324 L502 318 L498 312 L447 268.7 L435.4 257 L405.9 225.4 L401 219 Z" fill="rgba(215,230,255,0.16)" stroke="#d8f8e6" stroke-width="1.3" /><path d="M413 200.6 L421 210 L455 242 L456 248 L459 254 L512 287 L538 311 L540 315 L516 323 L504 317 L500 311 L449 267.7 L437.4 256 L407.9 224.4 L403 218 Z" fill="none" stroke="#d8f8e6" stroke-width="0.8" /><path d="M415 206 L450 240 L457 255 L455 262 L447 268.7" fill="none" stroke="#d8f8e6" stroke-width="0.9" stroke-opacity="1"/><path d="M407 212 L440 245 L452 262" fill="none" stroke="#d8f8e6" stroke-width="0.9" stroke-opacity="1"/><path d="M457 255 L505 290 L530 310 L536 312" fill="none" stroke="#d8f8e6" stroke-width="0.9" stroke-opacity="1"/><path d="M450 266 L500 300 L514 318" fill="none" stroke="#d8f8e6" stroke-width="0.9" stroke-opacity="1"/><path d="M480 295 L485 310 L510 322" fill="none" stroke="#d8f8e6" stroke-width="0.9" stroke-opacity="1"/><path d="M498 312 L520 306 L538 316" fill="none" stroke="#d8f8e6" stroke-width="0.9" stroke-opacity="1"/><ellipse cx="518" cy="298" rx="5" ry="8" transform="rotate(-35 518 298)" fill="none" stroke="#d8f8e6" stroke-width="0.8" /><ellipse cx="420" cy="224" rx="2" ry="2" transform="rotate(0 420 224)" fill="none" stroke="#d8f8e6" stroke-width="0.9" /><ellipse cx="433" cy="238" rx="2" ry="2" transform="rotate(0 433 238)" fill="none" stroke="#d8f8e6" stroke-width="0.9" /><path d="M580.6 466.5 L581.8 464 L609.7 452.5 L613.5 453.8 L614.7 475.3 L613.5 498.1 L616 513.3 L625 531 L640.1 558.4 L641.5 566.7 L637.4 575.1 L629 576.5 L617.9 569.5 L602.6 566.7 L590 559.8 L584.5 545.9 L585.9 525 L588.2 513.3 L585.6 494.3 Z" fill="rgba(160,160,172,0.24)" stroke="#f8bf86" stroke-width="1.5" /><path d="M578.1 468 L579.3 465.5 L607.2 454 L611 455.3 L612.2 476.8 L611 499.6 L613.5 514.8 L622.5 532.5 L637.6 559.9 L639 568.2 L634.9 576.6 L626.5 578 L615.4 571 L600.1 568.2 L587.5 561.3 L582 547.4 L583.4 526.5 L585.7 514.8 L583.1 495.8 Z" fill="none" stroke="#f8bf86" stroke-width="0.8" /><path d="M581.8 464 L600.8 469 L613.5 453.8" fill="none" stroke="#f8bf86" stroke-width="1" stroke-opacity="1"/><path d="M600.8 469 L603.4 500.6 L606 530 L620 555 L637 570" fill="none" stroke="#f8bf86" stroke-width="0.9" stroke-opacity="1"/><path d="M592 500 L596 540 L604 560" fill="none" stroke="#f8bf86" stroke-width="0.8" stroke-opacity="1"/><path d="M602 530 L620 520 L632 548" fill="none" stroke="#f8bf86" stroke-width="0.8" stroke-opacity="1"/><ellipse cx="592" cy="476" rx="2.8" ry="3.2199999999999998" transform="rotate(-20 592 476)" fill="none" stroke="#f8bf86" stroke-width="0.9" /><ellipse cx="595" cy="493" rx="2.8" ry="3.2199999999999998" transform="rotate(-20 595 493)" fill="none" stroke="#f8bf86" stroke-width="0.9" /><ellipse cx="600" cy="532" rx="2.2" ry="2.53" transform="rotate(-20 600 532)" fill="none" stroke="#f8bf86" stroke-width="0.9" /><ellipse cx="605" cy="536" rx="2.2" ry="2.53" transform="rotate(-20 605 536)" fill="none" stroke="#f8bf86" stroke-width="0.9" /><ellipse cx="628" cy="566" rx="4.5" ry="5.175" transform="rotate(-20 628 566)" fill="none" stroke="#f8bf86" stroke-width="0.9" /><ellipse cx="610" cy="545" rx="3" ry="3.4499999999999997" transform="rotate(-20 610 545)" fill="none" stroke="#f8bf86" stroke-width="0.9" /><path d="M533 397 L559 390 L558.4 450 L565.4 479.1 L575.5 486.7 L578 500.6 L580.3 525 L581.7 533.3 L585.9 550 L595.6 565.3 L609.5 580.6 L612.3 589 L608.2 597.3 L598.4 598 L590 593.2 L581.7 589 L565 593.2 L553.9 587.6 L551.1 577.9 L556.7 552.8 L560.3 526 L552.7 503.2 L546.4 484.2 L547 475.3 L542.6 450 Z" fill="rgba(160,160,172,0.22)" stroke="#f8bf86" stroke-width="1.5" /><path d="M535.5 396 L561.5 389 L560.9 449 L567.9 478.1 L578 485.7 L580.5 499.6 L582.8 524 L584.2 532.3 L588.4 549 L598.1 564.3 L612 579.6 L614.8 588 L610.7 596.3 L600.9 597 L592.5 592.2 L584.2 588 L567.5 592.2 L556.4 586.6 L553.6 576.9 L559.2 551.8 L562.8 525 L555.2 502.2 L548.9 483.2 L549.5 474.3 L545.1 449 Z" fill="none" stroke="#f8bf86" stroke-width="0.8" /><path d="M551.5 450 L563.5 481.6 L570 500 L574 530 L580 550" fill="none" stroke="#f8bf86" stroke-width="0.9" stroke-opacity="1"/><path d="M547 475.3 L565.4 479.1" fill="none" stroke="#f8bf86" stroke-width="0.9" stroke-opacity="1"/><path d="M552.7 503.2 L578 500.6" fill="none" stroke="#f8bf86" stroke-width="0.9" stroke-opacity="1"/><path d="M560.3 526 L580.3 525" fill="none" stroke="#f8bf86" stroke-width="0.9" stroke-opacity="1"/><path d="M554 494 L562 492 L572 520 L566 524 Z" fill="none" stroke="#f8bf86" stroke-width="0.8" /><path d="M568 563 L580 560 L588 588 L574 590 Z" fill="rgba(230,230,240,0.2)" stroke="#f8bf86" stroke-width="0.8" /><ellipse cx="566" cy="578" rx="4.8" ry="5.52" transform="rotate(-20 566 578)" fill="none" stroke="#f8bf86" stroke-width="0.9" /><ellipse cx="598" cy="586" rx="4.8" ry="5.52" transform="rotate(-20 598 586)" fill="none" stroke="#f8bf86" stroke-width="0.9" /><ellipse cx="566" cy="550" rx="2.2" ry="2.53" transform="rotate(-20 566 550)" fill="none" stroke="#f8bf86" stroke-width="0.9" /><ellipse cx="562" cy="534" rx="2.2" ry="2.53" transform="rotate(-20 562 534)" fill="none" stroke="#f8bf86" stroke-width="0.9" /><path d="M541 420 L548 455" fill="none" stroke="#f8bf86" stroke-width="0.8" stroke-opacity="1"/><path d="M545 400 L552 455" fill="none" stroke="#f8bf86" stroke-width="0.8" stroke-opacity="1"/><path d="M692 285 L699.5 253.8 L708.6 247.4 L717.8 252 L723.3 266.6 L739.7 286.7 L745.2 297.7 L743.4 310.5 L734.2 315 L721.4 312.3 L705 303.1 L694 299.5 Z" fill="rgba(235,235,210,0.22)" stroke="#f6ea96" stroke-width="1.6" /><path d="M689.5 287.5 L697 256.3 L706.1 249.9 L715.3 254.5 L720.8 269.1 L737.2 289.2 L742.7 300.2 L740.9 313 L731.7 317.5 L718.9 314.8 L702.5 305.6 L691.5 302 Z" fill="none" stroke="#f6ea96" stroke-width="0.9" /><path d="M574 354 L655 306 L662 326 L584 371 Z" fill="rgba(250,248,225,0.18)" stroke="#f6ea96" stroke-width="1.1" /><path d="M578 362 L658 316" fill="none" stroke="#f6ea96" stroke-width="0.8" stroke-opacity="1"/><path d="M652 308.6 L657.4 299.5 L664.7 275.7 L673.9 269.3 L683 273.9 L688.5 284.9 L692 300 L699.5 314.1 L708.6 319.6 L712.3 328.7 L708.6 336.1 L699.5 336.1 L688.5 332.4 L670.2 328.7 L660 330 Z" fill="rgba(235,235,210,0.22)" stroke="#f6ea96" stroke-width="1.6" /><path d="M649.5 311.1 L654.9 302 L662.2 278.2 L671.4 271.8 L680.5 276.4 L686 287.4 L689.5 302.5 L697 316.6 L706.1 322.1 L709.8 331.2 L706.1 338.6 L697 338.6 L686 334.9 L667.7 331.2 L657.5 332.5 Z" fill="none" stroke="#f6ea96" stroke-width="0.9" /><ellipse cx="708" cy="256" rx="3.5" ry="4.2" transform="rotate(-30 708 256)" fill="rgba(200,215,240,0.3)" stroke="#f6ea96" stroke-width="0.9" /><ellipse cx="676" cy="279" rx="3.5" ry="4.2" transform="rotate(-30 676 279)" fill="rgba(200,215,240,0.3)" stroke="#f6ea96" stroke-width="0.9" /><ellipse cx="733" cy="305" rx="3.5" ry="4.2" transform="rotate(-30 733 305)" fill="rgba(200,215,240,0.3)" stroke="#f6ea96" stroke-width="0.9" /><ellipse cx="700" cy="327" rx="3.5" ry="4.2" transform="rotate(-30 700 327)" fill="rgba(200,215,240,0.3)" stroke="#f6ea96" stroke-width="0.9" /><ellipse cx="690" cy="296" rx="1.8" ry="2.16" transform="rotate(-30 690 296)" fill="rgba(200,215,240,0.3)" stroke="#f6ea96" stroke-width="0.9" /><ellipse cx="716" cy="281" rx="1.8" ry="2.16" transform="rotate(-30 716 281)" fill="rgba(200,215,240,0.3)" stroke="#f6ea96" stroke-width="0.9" /><ellipse cx="708" cy="268" rx="1.8" ry="2.16" transform="rotate(-30 708 268)" fill="rgba(200,215,240,0.3)" stroke="#f6ea96" stroke-width="0.9" /><ellipse cx="673" cy="307" rx="8" ry="12" transform="rotate(-30 673 307)" fill="rgba(250,248,225,0.15)" stroke="#f6ea96" stroke-width="1.1" /><path d="M687 290 L694.5 258.8 L703.6 252.4 L712.8 257 L718.3 271.6 L734.7 291.7 L740.2 302.7 L738.4 315.5 L729.2 320 L716.4 317.3 L700 308.1 L689 304.5 Z" fill="none" stroke="#f6ea96" stroke-width="0.8" /><path d="M647 313.6 L652.4 304.5 L659.7 280.7 L668.9 274.3 L678 278.9 L683.5 289.9 L687 305 L694.5 319.1 L703.6 324.6 L707.3 333.7 L703.6 341.1 L694.5 341.1 L683.5 337.4 L665.2 333.7 L655 335 Z" fill="none" stroke="#f6ea96" stroke-width="0.8" /><path d="M700 300 L735 300" fill="none" stroke="#f6ea96" stroke-width="0.9" stroke-opacity="1"/><path d="M712 270 L725 295" fill="none" stroke="#f6ea96" stroke-width="0.9" stroke-opacity="1"/><path d="M655 312 L690 330" fill="none" stroke="#f6ea96" stroke-width="0.9" stroke-opacity="1"/><ellipse cx="668" cy="310" rx="8" ry="12" transform="rotate(-30 668 310)" fill="none" stroke="#f6ea96" stroke-width="0.9" /><ellipse cx="693" cy="294" rx="6" ry="10" transform="rotate(-30 693 294)" fill="none" stroke="#f6ea96" stroke-width="0.9" /><path d="M640 318 L650 340" fill="none" stroke="#f6ea96" stroke-width="0.9" stroke-opacity="1"/><path d="M600 343 L615 365" fill="none" stroke="#f6ea96" stroke-width="0.8" stroke-opacity="1"/><path d="M568.5 342.5H585.5L588.5 350.5L585.5 360.5H568.5Z" fill="none" stroke="#000" stroke-width="1.3"/><path d="M570.5 366V377M565 371.5H576" stroke="#6a8ad8" stroke-width="1"/></svg><div style="position:absolute;left:490px;top:658px;width:133px;height:13px;background:#fff;border:1px solid #333;box-sizing:border-box"></div><div style="position:absolute;left:490px;top:658px;width:67px;height:13px;background:#000"></div><div style="position:absolute;left:476.3px;top:642.84px;height:16px;line-height:16px;font-size:12px;font-weight:normal;color:#000;letter-spacing:-0.850px;white-space:nowrap;">0.000</div><div style="position:absolute;left:609.6px;top:642.84px;height:16px;line-height:16px;font-size:12px;font-weight:normal;color:#000;letter-spacing:-0.675px;white-space:nowrap;">0.200</div><div style="position:absolute;left:639px;top:642.84px;height:16px;line-height:16px;font-size:12px;font-weight:normal;color:#000;letter-spacing:-0.200px;white-space:nowrap;">(m)</div><div style="position:absolute;left:542.8px;top:675.84px;height:16px;line-height:16px;font-size:12px;font-weight:normal;color:#000;letter-spacing:-0.950px;white-space:nowrap;">0.100</div><svg style="position:absolute;left:0px;top:0px;pointer-events:none" width="791" height="711" viewBox="0 0 791 711"><path d="M726 654V631" stroke="#006000" stroke-width="2.4"/><path d="M722 632L726 621.5L730 632Z" fill="#007000"/><path d="M726 655L752 670" stroke="#900000" stroke-width="2.4"/><path d="M749 665L755 672L745 671.5Z" fill="#b00000"/><path d="M726 655L700 670" stroke="#0000d0" stroke-width="2.4"/><path d="M703 665L697 672L707 671.5Z" fill="#0000e0"/><circle cx="726" cy="655" r="4" fill="#20c8c8"/><circle cx="725" cy="654" r="1.5" fill="#80f0f0"/></svg><div style="position:absolute;left:724.5px;top:605.19px;height:16px;line-height:16px;font-size:11px;font-weight:normal;color:#00a000;letter-spacing:0.000px;white-space:nowrap;">Y</div><div style="position:absolute;left:759px;top:663.19px;height:16px;line-height:16px;font-size:11px;font-weight:normal;color:#ff0000;letter-spacing:0.000px;white-space:nowrap;">X</div><div style="position:absolute;left:692px;top:663.19px;height:16px;line-height:16px;font-size:11px;font-weight:normal;color:#0000ff;letter-spacing:0.000px;white-space:nowrap;">Z</div>
</body></html>
